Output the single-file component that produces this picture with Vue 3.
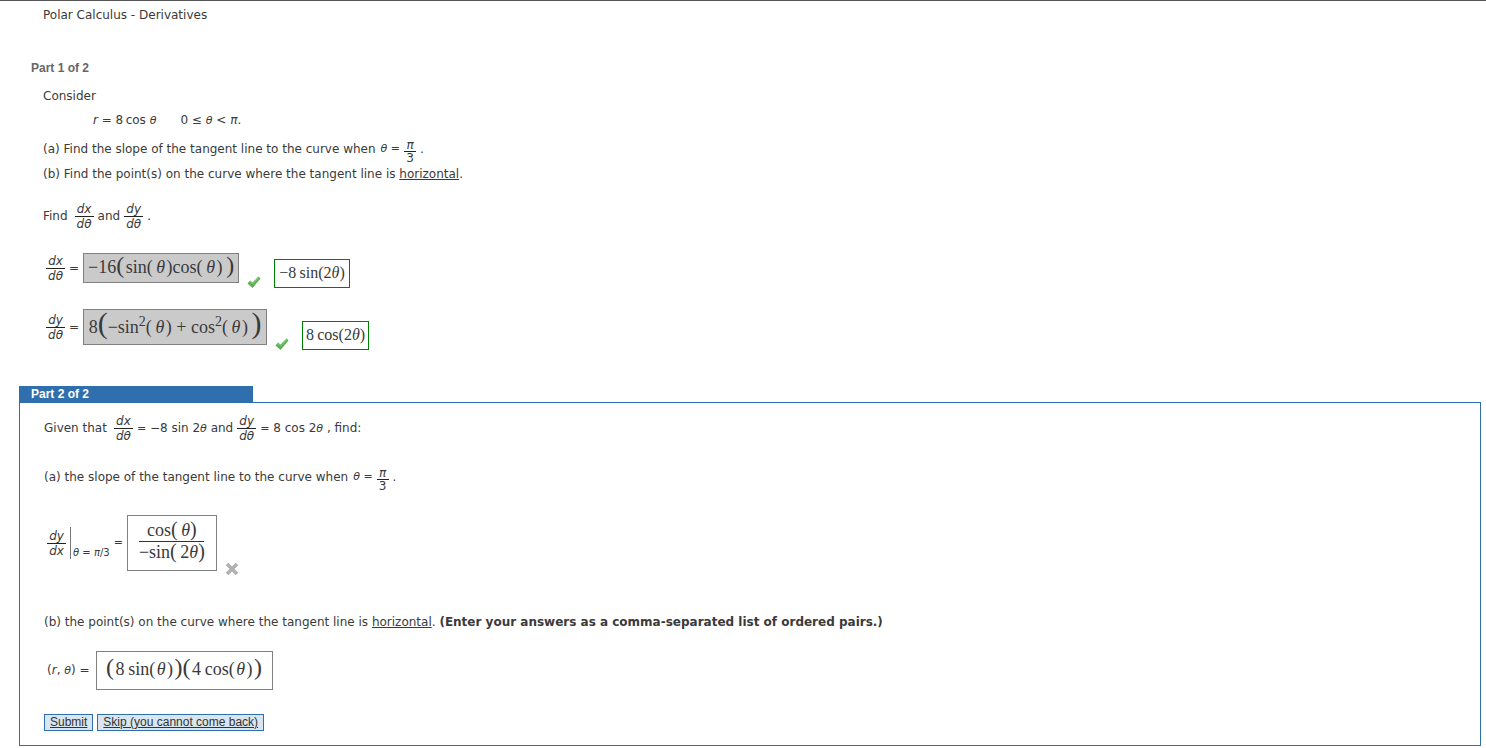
<script setup>
import { h } from 'vue'

const Frac = (props) =>
  h('span', { class: 'frac' }, [
    h('span', { class: 'num' }, props.n),
    h('span', { class: 'den' }, props.d),
  ])
Frac.props = ['n', 'd']
</script>

<template>
  <main class="page">
    <h1 class="title">Polar Calculus - Derivatives</h1>

    <section class="part-one">
      <h2 class="part-label">Part 1 of 2</h2>
      <div class="body">
        <p class="consider">Consider</p>
        <p class="equation">
          <span><i>r</i> = 8&#8201;cos <i class="small">θ</i></span>
          <span>0 ≤ <i class="small">θ</i> &lt; <i>π</i>.</span>
        </p>
        <p class="row low">
          <span>(a) Find the slope of the tangent line to the curve when</span>
          <span class="small lead"><i>θ</i> =</span>
          <Frac class="narrow" n="π" d="3" />
          <span>.</span>
        </p>
        <p class="part-b">(b) Find the point(s) on the curve where the tangent line is <u>horizontal</u>.</p>
        <p class="row find">
          <span class="word">Find</span>
          <Frac n="dx" d="dθ" />
          <span>and</span>
          <Frac n="dy" d="dθ" />
          <span>.</span>
        </p>

        <div class="row answer first">
          <Frac n="dx" d="dθ" />
          <span>=</span>
          <span class="math locked" role="textbox" aria-readonly="true" aria-label="dx/dθ">
            <span>−16<span class="p1">(</span>&#8202;sin(&#8201;<i>θ</i>&#8202;)cos(&#8201;<i>θ</i>&#8202;)&#8201;<span class="p1">)</span></span>
          </span>
          <svg class="mark" viewBox="0 0 14 12" role="img" aria-label="correct">
            <path d="M0.500 7.500 3 4.500 5.500 6.500 11.500 0.500 13.500 2.500 5.500 12Z" fill="#58b04f" />
            <path d="M1.500 7 3 5.500 5.500 8 12 1.500" fill="none" stroke="#8fd386" />
          </svg>
          <span class="key">−8&#8201;sin(2<i>θ</i>)</span>
        </div>

        <div class="row answer second">
          <Frac n="dy" d="dθ" />
          <span>=</span>
          <span class="math locked tall" role="textbox" aria-readonly="true" aria-label="dy/dθ">
            <span>8<span class="p2">(</span>−sin<sup>2</sup>(&#8201;<i>θ</i>&#8202;) + cos<sup>2</sup>(&#8201;<i>θ</i>&#8202;)&#8201;<span class="p2">)</span></span>
          </span>
          <svg class="mark" viewBox="0 0 14 12" role="img" aria-label="correct">
            <path d="M0.500 7.500 3 4.500 5.500 6.500 11.500 0.500 13.500 2.500 5.500 12Z" fill="#58b04f" />
            <path d="M1.500 7 3 5.500 5.500 8 12 1.500" fill="none" stroke="#8fd386" />
          </svg>
          <span class="key short">8&#8201;cos(2<i>θ</i>)</span>
        </div>
      </div>
    </section>

    <section class="part-two">
      <h2 class="tab">Part 2 of 2</h2>
      <div class="panel">
        <p class="row given">
          <span class="word">Given that</span>
          <Frac n="dx" d="dθ" />
          <span><span class="small">=</span> −8 sin 2<i class="small">θ</i> and</span>
          <Frac n="dy" d="dθ" />
          <span><span class="small">=</span> 8 cos 2<i class="small">θ</i> , find:</span>
        </p>
        <p class="row low slope">
          <span>(a) the slope of the tangent line to the curve when</span>
          <span class="small lead"><i>θ</i> =</span>
          <Frac class="narrow" n="π" d="3" />
          <span>.</span>
        </p>
        <div class="row answer third">
          <Frac n="dy" d="dx" />
          <span class="at"><i>θ</i> = <i>π</i>/3</span>
          <span class="small">=</span>
          <span class="math quotient" role="textbox" tabindex="0" aria-label="dy/dx at θ = π/3">
            <span class="top">cos<span class="p0">(</span>&#8201;<i>θ</i><span class="p0">)</span></span>
            <span class="bottom">−sin<span class="p0">(</span>&#8201;2<i>θ</i><span class="p0">)</span></span>
          </span>
          <svg class="mark wrong" viewBox="0 0 14 12" role="img" aria-label="incorrect">
            <path d="M2 1 12 11M12 1 2 11" fill="none" stroke="#b0b0b0" stroke-width="3.500" />
          </svg>
        </div>
        <p class="points">
          (b) the point(s) on the curve where the tangent line is <u>horizontal</u>.
          <b>(Enter your answers as a comma-separated list of ordered pairs.)</b>
        </p>
        <div class="row answer fourth">
          <span>(<i>r</i>, <i class="small">θ</i>) =</span>
          <span class="math pair" role="textbox" tabindex="0" aria-label="(r, θ)">
            <span><span class="p1">(</span>&#8202;8&#8201;sin(&#8202;<i>θ</i>&#8202;)&#8202;<span class="p1">)(</span>&#8202;4&#8201;cos(&#8202;<i>θ</i>&#8202;)&#8202;<span class="p1">)</span></span>
          </span>
        </div>
        <div class="buttons">
          <button type="button">Submit</button>
          <button type="button">Skip (you cannot come back)</button>
        </div>
      </div>
    </section>
  </main>
</template>

<style>
body {
  background: #fff;
}
</style>

<style scoped>
.page {
  border-top: 1px solid #555;
  color: #3a3a3a;
  font: 12px/16px "DejaVu Sans", Verdana, sans-serif;
}
h1, h2, p {
  margin: 0;
}
.title {
  padding: 6px 43px 0;
  font-size: 12px;
  font-weight: 400;
}
.part-label, .tab {
  font: bold 12px/16px "Liberation Sans", Arial, sans-serif;
}
.part-label {
  margin: 37px 31px 12px;
  color: #666;
}
.body {
  padding-left: 43px;
}
.equation {
  display: flex;
  gap: 24px;
  padding: 8px 50px 7px;
}
.small {
  font-size: 11px;
}
.row {
  display: flex;
  align-items: center;
  gap: 4px;
}
.low {
  height: 26px;
}
.lead {
  margin-left: 1px;
}
.page :deep(.frac) {
  display: flex;
  flex-direction: column;
  width: 19px;
  text-align: center;
  font-style: italic;
  line-height: 14px;
}
.page :deep(.num) {
  border-bottom: 1px solid #222;
}
.page :deep(.narrow) {
  width: 12px;
  padding-top: 4px;
  line-height: 12px;
}
.page :deep(.narrow .den) {
  font-style: normal;
}
.part-b {
  margin-top: 4px;
}
.find {
  margin-top: 18px;
  height: 32px;
}
.word {
  margin-right: 3px;
}
.answer {
  padding-left: 3px;
}
.first {
  margin-top: 21px;
  height: 30px;
}
.second {
  margin-top: 26px;
  height: 36px;
}
.math {
  display: flex;
  align-items: center;
  justify-content: center;
  box-sizing: border-box;
  border: 1px solid #808080;
  padding-bottom: 3px;
  font: 18px/20px "Liberation Serif", "Times New Roman", serif;
  white-space: nowrap;
}
.p0 {
  font-size: 20px;
}
.p1 {
  font-size: 24px;
}
.p2 {
  font-size: 30px;
}
.p0, .p1, .p2 {
  line-height: 0;
}
.locked {
  height: 30px;
  min-width: 156px;
  background: #cacaca;
}
.tall {
  height: 36px;
  min-width: 184px;
  padding-bottom: 0;
}
.math sup {
  font-size: 14px;
  line-height: 0;
}
.mark {
  flex: none;
  align-self: flex-end;
  width: 14px;
  height: 12px;
  margin: 0 9px -5px 4px;
}
.wrong {
  margin-bottom: -4px;
}
.key {
  display: flex;
  align-items: center;
  justify-content: center;
  box-sizing: border-box;
  height: 29px;
  min-width: 76px;
  padding-bottom: 2px;
  border: 1px solid #008000;
  font: 16px/20px "Liberation Serif", "Times New Roman", serif;
  white-space: pre;
  align-self: flex-end;
  margin-bottom: -5px;
}
.short {
  min-width: 67px;
}
.part-two {
  margin: 41px 5px 2px 19px;
}
.tab {
  width: 222px;
  padding-left: 12px;
  background: #2f6fad;
  color: #fff;
}
.panel {
  border: 1px solid #2f6fad;
  padding: 9px 24px 14px;
}
.given {
  height: 32px;
}
.slope {
  margin-top: 20px;
}
.third {
  margin-top: 25px;
  height: 56px;
}
.at {
  padding: 20px 0 0 2px;
  border-left: 1px solid #777;
  font-size: 10px;
  line-height: 12px;
}
.quotient {
  flex-direction: column;
  height: 56px;
  min-width: 90px;
  line-height: 21px;
}
.top {
  border-bottom: 1px solid #333;
  width: 65px;
  text-align: center;
}
.points {
  margin-top: 43px;
}
.fourth {
  gap: 6px;
  margin-top: 21px;
}
.pair {
  height: 39px;
  min-width: 177px;
}
.buttons {
  display: flex;
  gap: 4px;
  margin-top: 24px;
}
button {
  padding: 0 5px;
  border: 1px solid #2f6fad;
  background: #d9e5ef;
  color: #333;
  font: 12px/15px "Liberation Sans", Arial, sans-serif;
  text-decoration: underline;
}
</style>
